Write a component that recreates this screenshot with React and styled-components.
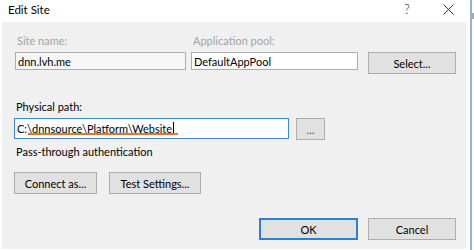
import React from "react";
import styled, { createGlobalStyle } from "styled-components";

const Global = createGlobalStyle`
  html, body { margin: 0; padding: 0; background: #ffffff; }
  body { font-family: "Lato", "Noto Sans", sans-serif; font-size: 11px; color: #000; }
  * { box-sizing: border-box; }
`;

const Screen = styled.div`
  display: flex;
  width: 474px;
  height: 250px;
  background: #ffffff;
  overflow: hidden;
`;

const Dialog = styled.div`
  width: 470px;
  height: 250px;
  display: flex;
  flex-direction: column;
  padding: 0 4px 1px 2px;
  background: #ffffff;
`;

const Edge = styled.div`
  width: 4px;
  border-left: 2px solid #93b4d6;
  position: relative;
  background: #ffffff;
`;

const EdgeThumb = styled.div`
  position: absolute;
  top: 13px;
  left: 0;
  width: 2px;
  height: 6px;
  background: #a8a8a8;
`;

const TitleBar = styled.div`
  height: 22px;
  display: flex;
  align-items: center;
  padding-left: 8px;
  margin-left: -2px;
`;

const Title = styled.div`
  flex: 1;
  font-size: 11.5px;
  line-height: 16px;
  margin-top: -3px;
`;

const TitleButton = styled.div`
  width: ${(p) => p.$w}px;
  height: 20px;
  margin-right: ${(p) => p.$mr || 0}px;
  display: flex;
  align-items: center;
  justify-content: center;
  margin-top: -4px;
  font-size: 13px;
  font-weight: 300;
  color: #222;
`;

const Content = styled.div`
  flex: 1;
  background: #f0f0f0;
  padding: 11px 0 0 12px;
  display: flex;
  flex-direction: column;
`;

const Row = styled.div`
  display: flex;
  align-items: flex-end;
  margin-top: ${(p) => p.$mt || 0}px;
`;

const Field = styled.div`
  display: flex;
  flex-direction: column;
  width: ${(p) => p.$w}px;
  margin-left: ${(p) => p.$ml || 0}px;
`;

const Label = styled.div`
  color: ${(p) => (p.$disabled ? "#a3a3a3" : "#000")};
  line-height: 16px;
  padding-left: 2px;
  margin-bottom: 3px;
  white-space: nowrap;
`;

const Input = styled.div`
  height: ${(p) => p.$h || 18}px;
  border: 1px solid ${(p) => (p.$focus ? "#3b8ad8" : "#abadb3")};
  background: ${(p) => (p.$disabled ? "#f7f7f7" : "#ffffff")};
  display: flex;
  align-items: center;
  padding-left: 2px;
  white-space: nowrap;
  position: relative;
`;

const Caret = styled.span`
  display: inline-block;
  width: 1px;
  height: 13px;
  background: #000;
  margin-left: 1px;
`;

const Underline = styled.div`
  position: absolute;
  left: 13px;
  top: 14px;
  width: 150px;
  height: 2px;
  background: #e2762c;
`;

const Button = styled.div`
  width: ${(p) => p.$w}px;
  height: 22px;
  margin-left: ${(p) => p.$ml || 0}px;
  margin-bottom: ${(p) => p.$mb || 0}px;
  border: 1px solid ${(p) => (p.$default ? "#2a7fd6" : "#adadad")};
  box-shadow: ${(p) => (p.$default ? "inset 0 0 0 1px #2a7fd6" : "none")};
  background: #e1e1e1;
  display: flex;
  align-items: center;
  justify-content: center;
  white-space: nowrap;
  color: ${(p) => (p.$dim ? "#555" : "#000")};
`;

const Plain = styled.div`
  line-height: 16px;
  padding-left: 2px;
  margin-top: ${(p) => p.$mt || 0}px;
  white-space: nowrap;
`;

export default function App() {
  return (
    <>
      <Global />
      <Screen>
        <Dialog>
          <TitleBar>
            <Title>Edit Site</Title>
            <TitleButton $w={20} $mr={13}>?</TitleButton>
            <TitleButton $w={36}>
              <svg width="11" height="11" viewBox="0 0 11 11">
                <path d="M0.5 0.5 L10.5 10.5 M10.5 0.5 L0.5 10.5" stroke="#333" strokeWidth="1" fill="none" />
              </svg>
            </TitleButton>
          </TitleBar>
          <Content>
            <Row>
              <Field $w={171} $ml={1}>
                <Label $disabled>Site name:</Label>
                <Input $disabled>dnn.lvh.me</Input>
              </Field>
              <Field $w={167} $ml={5}>
                <Label $disabled>Application pool:</Label>
                <Input>DefaultAppPool</Input>
              </Field>
              <Button $w={88} $ml={10} $mb={-4}>Select...</Button>
            </Row>
            <Row $mt={29}>
              <Field $w={275}>
                <Label>Physical path:</Label>
                <Input $focus $h={21}>
                  C:\dnnsource\Platform\Website<Caret />
                  <Underline />
                </Input>
              </Field>
              <Button $w={29} $ml={7} $mb={-1} $dim>...</Button>
            </Row>
            <Plain $mt={5}>Pass-through authentication</Plain>
            <Row $mt={12}>
              <Button $w={83}>Connect as...</Button>
              <Button $w={92} $ml={12}>Test Settings...</Button>
            </Row>
            <Row $mt={24}>
              <Button $w={99} $ml={245} $default>OK</Button>
              <Button $w={88} $ml={10}>Cancel</Button>
            </Row>
          </Content>
        </Dialog>
        <Edge>
          <EdgeThumb />
        </Edge>
      </Screen>
    </>
  );
}
